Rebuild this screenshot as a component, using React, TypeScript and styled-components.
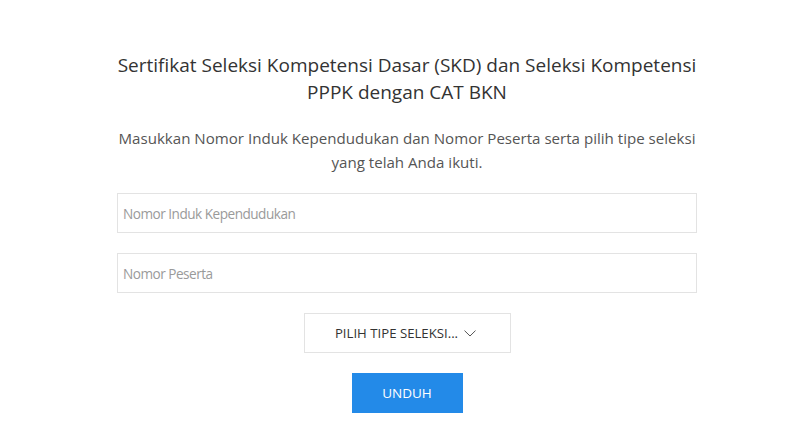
import React from "react";
import styled, { createGlobalStyle } from "styled-components";

const Global = createGlobalStyle`
  html, body { margin: 0; padding: 0; background: #ffffff; }
  body { font-family: "Open Sans", "Noto Sans", Arial, sans-serif; }
`;

const Page = styled.main`
  display: flex;
  justify-content: center;
  padding: 52px 0 0 7px;
`;

const Form = styled.form`
  width: 580px;
  display: flex;
  flex-direction: column;
  align-items: center;
`;

const Title = styled.h1`
  margin: 0;
  font-size: 19px;
  line-height: 27px;
  font-weight: 400;
  color: #333333;
  text-align: center;
`;

const Lead = styled.p`
  margin: 20px 0 0;
  font-size: 15.1px;
  line-height: 24px;
  color: #555555;
  text-align: center;
`;

const Field = styled.input<{ $first?: boolean }>`
  box-sizing: border-box;
  width: 580px;
  height: 40px;
  margin-top: ${(p) => (p.$first ? "19px" : "20px")};
  padding: 0 5px;
  border: 1px solid #e3e3e3;
  background: #fff;
  font-family: inherit;
  font-size: 13.6px;
  letter-spacing: -0.5px;
  color: #333;
  outline: none;
  &::placeholder { color: #9a9a9a; }
`;

const Select = styled.button`
  box-sizing: border-box;
  margin-top: 20px;
  width: 207px;
  height: 40px;
  display: flex;
  align-items: center;
  justify-content: center;
  gap: 6px;
  padding: 0 3px 0 0;
  border: 1px solid #e3e3e3;
  background: #fff;
  font-family: inherit;
  font-size: 13.2px;
  color: #333;
  cursor: pointer;
`;

const Submit = styled.button`
  box-sizing: border-box;
  margin-top: 20px;
  width: 111px;
  height: 40px;
  border: none;
  background: #238ae8;
  color: #fff;
  font-family: inherit;
  font-size: 13.5px;
  cursor: pointer;
`;

const Chevron = () => (
  <svg width="12" height="7" viewBox="0 0 12 7" fill="none">
    <path d="M0.5 0.6 L6 6 L11.5 0.6" stroke="#555" strokeWidth="1" />
  </svg>
);

export default function App() {
  return (
    <>
      <Global />
      <Page>
        <Form onSubmit={(e) => e.preventDefault()}>
          <Title>
            Sertifikat Seleksi Kompetensi Dasar (SKD) dan Seleksi Kompetensi
            <br />
            PPPK dengan CAT BKN
          </Title>
          <Lead>
            Masukkan Nomor Induk Kependudukan dan Nomor Peserta serta pilih tipe seleksi
            <br />
            yang telah Anda ikuti.
          </Lead>
          <Field $first placeholder="Nomor Induk Kependudukan" />
          <Field placeholder="Nomor Peserta" />
          <Select type="button">
            PILIH TIPE SELEKSI... <Chevron />
          </Select>
          <Submit type="submit">UNDUH</Submit>
        </Form>
      </Page>
    </>
  );
}
